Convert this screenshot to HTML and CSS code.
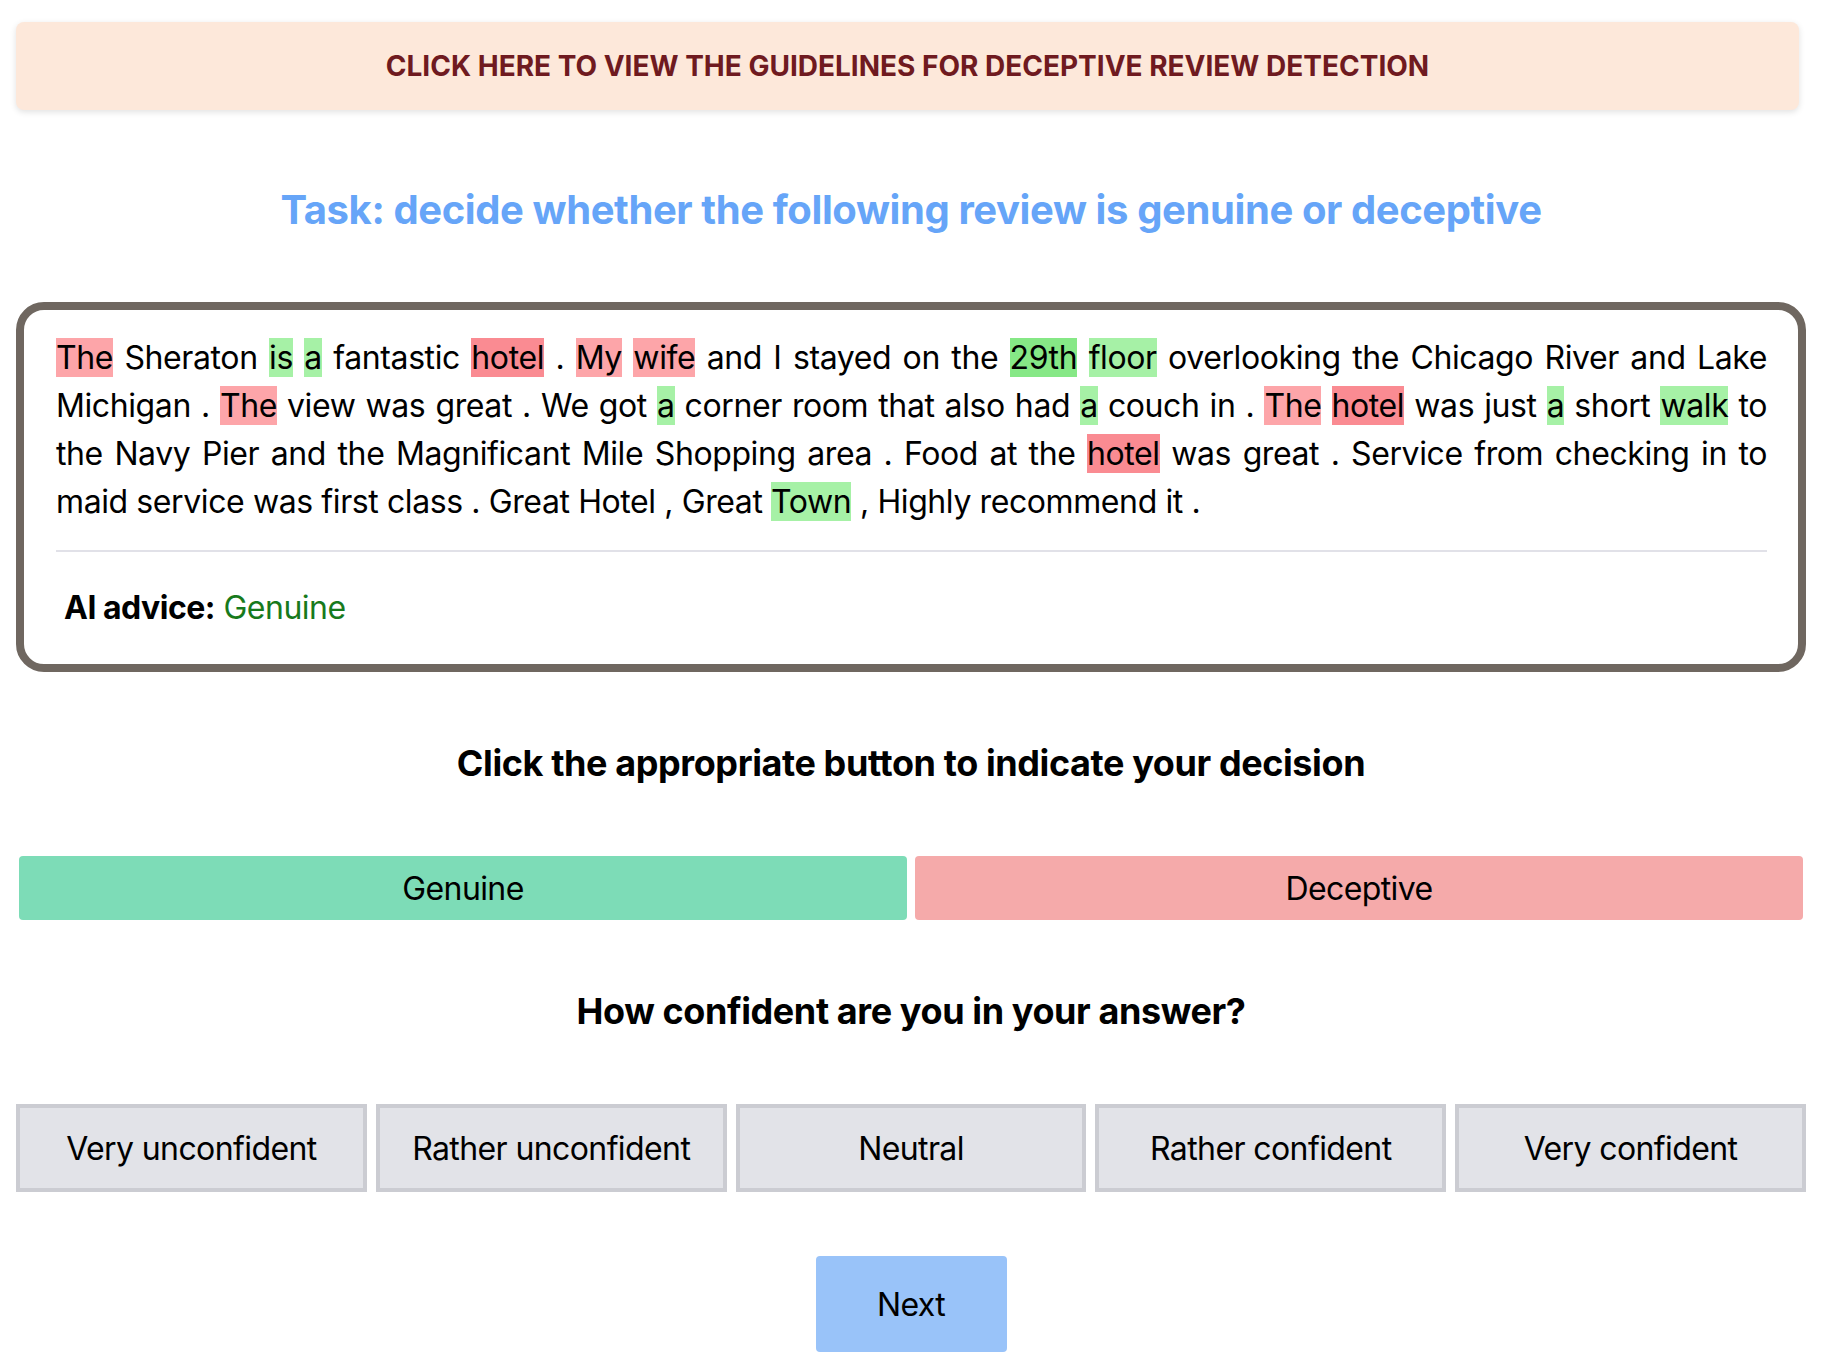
FILE: index.html
```html
<!DOCTYPE html>
<html lang="en">
<head>
<meta charset="utf-8">
<title>Deceptive review detection</title>
<link rel="stylesheet" href="styles.css">
</head>
<body>
<div class="page">
  <div class="banner">CLICK HERE TO VIEW THE GUIDELINES FOR DECEPTIVE REVIEW DETECTION</div>

  <h1 class="task">Task: decide whether the following review is genuine or deceptive</h1>

  <div class="review-box">
    <p class="review"><span class="neg1">The</span> Sheraton <span class="pos1">is</span> <span class="pos1">a</span> fantastic <span class="neg2">hotel</span> . <span class="neg1">My</span> <span class="neg1">wife</span> and I stayed on the <span class="pos2">29th</span> <span class="pos1">floor</span> overlooking the Chicago River and Lake Michigan . <span class="neg1">The</span> view was great . We got <span class="pos1">a</span> corner room that also had <span class="pos1">a</span> couch in . <span class="neg1">The</span> <span class="neg2">hotel</span> was just <span class="pos1">a</span> short <span class="pos1">walk</span> to the Navy Pier and the Magnificant Mile Shopping area . Food at the <span class="neg2">hotel</span> was great . Service from checking in to maid service was first class . Great Hotel , Great <span class="pos1">Town</span> , Highly recommend it .</p>
    <hr class="divider">
    <div class="advice"><strong>AI advice:</strong> <span class="advice-value">Genuine</span></div>
  </div>

  <h2 class="question">Click the appropriate button to indicate your decision</h2>

  <div class="decision">
    <button class="btn-decision genuine">Genuine</button>
    <button class="btn-decision deceptive">Deceptive</button>
  </div>

  <h2 class="question">How confident are you in your answer?</h2>

  <div class="confidence">
    <button class="btn-conf">Very unconfident</button>
    <button class="btn-conf">Rather unconfident</button>
    <button class="btn-conf">Neutral</button>
    <button class="btn-conf">Rather confident</button>
    <button class="btn-conf">Very confident</button>
  </div>

  <div class="next-row">
    <button class="btn-next">Next</button>
  </div>
</div>
</body>
</html>
```

FILE: styles.css
```css
* { box-sizing: border-box; }

html, body {
  margin: 0;
  padding: 0;
  background: #ffffff;
}

body {
  font-family: Inter, "Noto Sans", "Liberation Sans", sans-serif;
  color: #000;
  font-size: 32px;
  line-height: 48px;
}

.page {
  width: 1790px;
  margin-left: 16px;
  padding-top: 22px;
}

.banner {
  width: 1783px;
  height: 88px;
  display: flex;
  align-items: center;
  justify-content: center;
  background: #fde8da;
  color: #6f1a20;
  font-weight: 700;
  font-size: 28px;
  border-radius: 8px;
  box-shadow: 0 2px 6px rgba(0, 0, 0, 0.12);
}

.task {
  margin: 70px 0 62px;
  text-align: center;
  color: #66a5f8;
  font-size: 40px;
  line-height: 60px;
  font-weight: 700;
  letter-spacing: -0.4px;
}

.review-box {
  border: 8px solid #6f6760;
  border-radius: 28px;
  padding: 24px 31px 24px 32px;
}

.review {
  margin: 0;
  text-align: justify;
  letter-spacing: -0.4px;
}

.neg1 { background: #fda5a9; }
.neg2 { background: #fa8b92; }
.pos1 { background: #a6f1a6; }
.pos2 { background: #86e886; }

.divider {
  margin: 24px 0;
  border: 0;
  border-top: 2px solid #e1e1e8;
}

.advice {
  padding: 8px;
  letter-spacing: -0.5px;
}

.advice strong { font-weight: 700; }

.advice-value { color: #177a1c; }

.question {
  margin: 67px 0 69px;
  text-align: center;
  font-size: 36px;
  line-height: 48px;
  font-weight: 700;
  letter-spacing: -0.4px;
}

.decision {
  display: flex;
  gap: 8px;
  padding: 0 3px;
}

button {
  font-family: inherit;
  font-size: 32px;
  color: #000;
  cursor: pointer;
  letter-spacing: -0.6px;
}

.btn-decision {
  flex: 1;
  height: 64px;
  border: 0;
  border-radius: 4px;
}

.genuine { background: #7ddcb7; }
.deceptive { background: #f5aaaa; }

.confidence {
  display: flex;
  gap: 9px;
}

.btn-conf {
  flex: 1;
  height: 88px;
  background: #e2e3e8;
  border: 4px solid #cbccd2;
  border-radius: 0;
}

.next-row {
  display: flex;
  justify-content: center;
  margin-top: 64px;
}

.btn-next {
  width: 191px;
  height: 96px;
  border: 0;
  border-radius: 4px;
  background: #99c3f9;
}
```
